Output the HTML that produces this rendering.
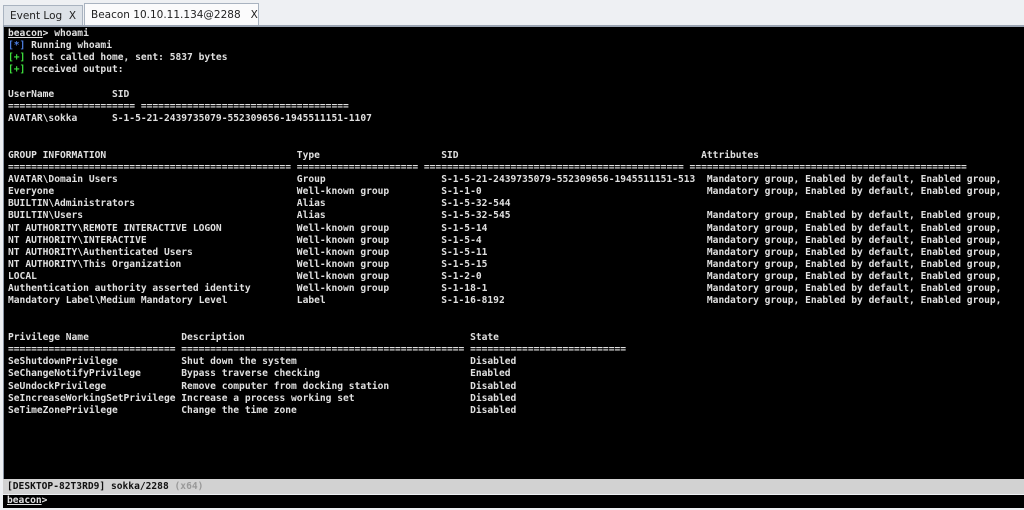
<!DOCTYPE html>
<html><head><meta charset="utf-8"><style>
html,body{margin:0;padding:0;width:1024px;height:510px;overflow:hidden;background:#eef0f3;}
.tab{position:absolute;font-family:"DejaVu Sans","Liberation Sans",sans-serif;font-size:10.5px;color:#222;box-sizing:border-box;border:1px solid #a9b3c0;border-bottom:none;white-space:nowrap;overflow:hidden;}
#t1{left:3px;top:5px;width:80px;height:20px;background:#dde2e8;padding:4px 0 0 6px;}
#t2{left:84px;top:3px;width:175px;height:22px;background:#fbfbfc;padding:5px 0 0 6px;}
#term{position:absolute;left:3px;top:25px;width:1021px;height:454px;background:#000;border-left:1px solid #8a94a3;border-top:2px solid #9aa4b2;box-sizing:border-box;}
pre{margin:0;position:absolute;left:4px;top:1px;font-family:"DejaVu Sans Mono","Liberation Mono",monospace;font-size:9.6px;line-height:12.15px;color:#e0e0e0;font-weight:bold;}
.g{color:#3ee03e}.b{color:#4d7fe0}.u{text-decoration:underline}
#status{position:absolute;left:3px;top:479px;width:1021px;height:15px;background:#d2d2d2;font-family:"DejaVu Sans Mono",monospace;font-size:9.6px;font-weight:bold;color:#111;line-height:15px;padding-left:4px;box-sizing:border-box;}
#prompt{position:absolute;left:3px;top:495px;width:1021px;height:13px;background:#000;font-family:"DejaVu Sans Mono",monospace;font-size:9.6px;font-weight:bold;color:#e0e0e0;line-height:12px;padding-left:4px;box-sizing:border-box;}
</style></head><body>
<div class="tab" id="t1">Event Log&nbsp;&nbsp;X</div>
<div class="tab" id="t2">Beacon 10.10.11.134@2288&nbsp;&nbsp;&nbsp;X</div>
<div id="term"><pre><span class="u">beacon</span>&gt; whoami
<span class="b">[*]</span> Running whoami
<span class="g">[+]</span> host called home, sent: 5837 bytes
<span class="g">[+]</span> received output:

UserName          SID
====================== ====================================
AVATAR\sokka      S-1-5-21-2439735079-552309656-1945511151-1107


GROUP INFORMATION                                 Type                     SID                                          Attributes
================================================= ===================== ============================================= ================================================
AVATAR\Domain Users                               Group                    S-1-5-21-2439735079-552309656-1945511151-513  Mandatory group, Enabled by default, Enabled group,
Everyone                                          Well-known group         S-1-1-0                                       Mandatory group, Enabled by default, Enabled group,
BUILTIN\Administrators                            Alias                    S-1-5-32-544
BUILTIN\Users                                     Alias                    S-1-5-32-545                                  Mandatory group, Enabled by default, Enabled group,
NT AUTHORITY\REMOTE INTERACTIVE LOGON             Well-known group         S-1-5-14                                      Mandatory group, Enabled by default, Enabled group,
NT AUTHORITY\INTERACTIVE                          Well-known group         S-1-5-4                                       Mandatory group, Enabled by default, Enabled group,
NT AUTHORITY\Authenticated Users                  Well-known group         S-1-5-11                                      Mandatory group, Enabled by default, Enabled group,
NT AUTHORITY\This Organization                    Well-known group         S-1-5-15                                      Mandatory group, Enabled by default, Enabled group,
LOCAL                                             Well-known group         S-1-2-0                                       Mandatory group, Enabled by default, Enabled group,
Authentication authority asserted identity        Well-known group         S-1-18-1                                      Mandatory group, Enabled by default, Enabled group,
Mandatory Label\Medium Mandatory Level            Label                    S-1-16-8192                                   Mandatory group, Enabled by default, Enabled group,


Privilege Name                Description                                       State
============================= ================================================= ===========================
SeShutdownPrivilege           Shut down the system                              Disabled
SeChangeNotifyPrivilege       Bypass traverse checking                          Enabled
SeUndockPrivilege             Remove computer from docking station              Disabled
SeIncreaseWorkingSetPrivilege Increase a process working set                    Disabled
SeTimeZonePrivilege           Change the time zone                              Disabled
</pre></div>
<div id="status">[DESKTOP-82T3RD9] sokka/2288 <span style="color:#999">(x64)</span></div>
<div id="prompt"><span class="u">beacon</span>&gt;</div>
</body></html>
